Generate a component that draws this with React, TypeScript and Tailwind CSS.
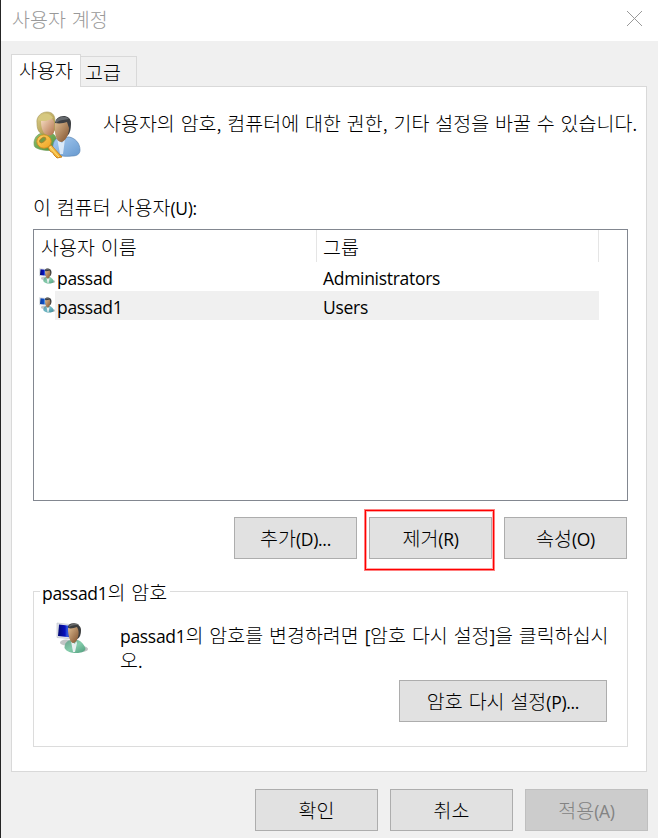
import type { ReactNode } from 'react';

const users = [
  { name: 'passad', group: 'Administrators', selected: false },
  { name: 'passad1', group: 'Users', selected: true },
];

// Latin runs are set in a separate face, slightly smaller than the Hangul around them
function Label({ text, className = '' }: { text: string; className?: string }) {
  const runs = text.split(/([A-Za-z0-9()[\]:.]+)/).filter(Boolean);
  return (
    <span className={`block h-[25px] whitespace-pre font-['Noto_Sans_CJK_KR',sans-serif] font-light text-[19.5px] leading-[23px] [word-spacing:1.6px] ${className}`}>
      {runs.map((run, i) =>
        /^[A-Za-z0-9()[\]:.]/.test(run) ? (
          <span key={i} className="font-['Open_Sans',sans-serif] text-[17.5px] font-normal leading-none tracking-[-0.3px]">{run}</span>
        ) : (
          <span key={i}>{run}</span>
        )
      )}
    </span>
  );
}

function Button({ children, disabled, wide }: { children: ReactNode; disabled?: boolean; wide?: boolean }) {
  return (
    <button
      disabled={disabled}
      className={`flex h-[42px] items-center justify-center border ${wide ? 'w-[208px]' : 'w-[123px]'} ${
        disabled ? 'border-[#bfbfbf] bg-[#cccccc] text-[#838383]' : 'border-[#adadad] bg-[#e1e1e1] text-black'
      }`}
    >
      {children}
    </button>
  );
}

function Gradients() {
  return (
    <svg className="absolute size-0">
      <defs>
        <linearGradient id="skin" x1="0" y1="0" x2="1" y2="1">
          <stop offset="0" stopColor="#dfbd92" />
          <stop offset="1" stopColor="#7e4f2c" />
        </linearGradient>
        <linearGradient id="paleSkin" x1="0" y1="0" x2="1" y2="1">
          <stop offset="0" stopColor="#f8dfc5" />
          <stop offset="1" stopColor="#b0704a" />
        </linearGradient>
        <linearGradient id="green" x1="0" y1="0" x2="1" y2="1">
          <stop offset="0" stopColor="#94c273" />
          <stop offset="1" stopColor="#4b8d35" />
        </linearGradient>
        <linearGradient id="blue" x1="0" y1="0" x2="1" y2="1">
          <stop offset="0" stopColor="#a9cdf2" />
          <stop offset="1" stopColor="#6799cf" />
        </linearGradient>
        <linearGradient id="teal" x1="0" y1="0" x2="1" y2="1">
          <stop offset="0" stopColor="#6aa08c" />
          <stop offset="0.5" stopColor="#85ccab" />
          <stop offset="1" stopColor="#4d9c7b" />
        </linearGradient>
        <linearGradient id="aqua" x1="0" y1="0" x2="1" y2="1">
          <stop offset="0" stopColor="#5c95ab" />
          <stop offset="0.5" stopColor="#70b8c4" />
          <stop offset="1" stopColor="#3c8793" />
        </linearGradient>
        <linearGradient id="screen" x1="0" y1="0" x2="1" y2="0">
          <stop offset="0" stopColor="#020874" />
          <stop offset="0.5" stopColor="#0710bd" />
          <stop offset="0.65" stopColor="#3158df" />
          <stop offset="1" stopColor="#0b19b8" />
        </linearGradient>
        <linearGradient id="screenSelected" x1="0" y1="0" x2="1" y2="0">
          <stop offset="0" stopColor="#0a3d9c" />
          <stop offset="0.5" stopColor="#0d4cc4" />
          <stop offset="0.65" stopColor="#4a8fe6" />
          <stop offset="1" stopColor="#1550c4" />
        </linearGradient>
        <linearGradient id="gold" x1="0" y1="0" x2="1" y2="1">
          <stop offset="0" stopColor="#fcd263" />
          <stop offset="1" stopColor="#eea222" />
        </linearGradient>
        <linearGradient id="hair" x1="0" y1="0" x2="1" y2="1">
          <stop offset="0" stopColor="#ddd08a" />
          <stop offset="1" stopColor="#a38c42" />
        </linearGradient>
      </defs>
    </svg>
  );
}

function UsersIcon() {
  return (
    <svg width="48" height="48" viewBox="0 0 48 48">
      <path d="M1 31c1-6 5-9 10-9h7c4 1 6 5 6 10v6c-6 3-19 1-22-2-1-1-1-3-1-5z" fill="url(#green)" stroke="#6d9b57" strokeWidth=".6" />
      <path d="M4 12C3 6 8 1 14 1c6 0 8 4 8 9v9l-3 4H9c-4-2-5-6-5-11z" fill="url(#hair)" stroke="#a39454" strokeWidth=".6" />
      <path d="M8 10c4 0 8-1 10-3 3 2 4 5 3 9v5c-1 3-4 4-7 3-4-1-6-7-6-14z" fill="url(#paleSkin)" />
      <path d="M5 9c4 2 11 1 15-2-2-4-6-5-9-4-3 1-5 3-6 6z" fill="#d6c880" />
      <path d="M20 39c-1-7 2-12 7-13h9c6 1 11 6 11 13 0 4-3 6-8 6-8 1-16 0-19-6z" fill="url(#blue)" stroke="#5c87b5" strokeWidth=".7" />
      <path d="M24 27l5 5 3-4-2 15h-3z" fill="#edf5fc" opacity=".8" />
      <path d="M22 14c-1-11 16-12 16-2 0 6-1 11-4 13L24 17z" fill="#3d3f42" />
      <path d="M22 12c5 1 9 0 12-1l2 6c0 7-4 14-8 14-5 0-7-9-6-19z" fill="url(#skin)" />
      <path d="M23 9c4-4 10-4 13-1-4 1-8 0-13 4z" fill="#666a6e" />
      <path d="M18 34l11 12-5 1-3-3-1-2-3-2-2-4z" fill="url(#gold)" stroke="#c67d16" strokeWidth=".9" />
      <ellipse cx="11" cy="30.5" rx="7.2" ry="6.7" fill="url(#gold)" stroke="#d08c20" strokeWidth=".9" />
      <ellipse cx="9.7" cy="29" rx="3.7" ry="2.1" transform="rotate(-38 9.7 29)" fill="#769a45" stroke="#b68123" strokeWidth=".8" />
      <path d="M17 36l9 10" stroke="#ffe27a" strokeWidth="1" />
    </svg>
  );
}

function UserIcon({ size, selected }: { size: number; selected?: boolean }) {
  return (
    <svg width={size} height={size} viewBox="0 0 32 32" className="shrink-0">
      <ellipse cx="10" cy="20.5" rx="6" ry="3" fill="#c3c5c6" />
      <ellipse cx="26" cy="27" rx="6" ry="3" fill="#bfc1c2" />
      <path d="M1 1l17 2-1 14-16-1.500z" fill="#e2e5ec" stroke="#b9bdc6" strokeWidth=".6" />
      <path d="M3 2.500l13 1.500v11.500L2 14z" fill={selected ? 'url(#screenSelected)' : 'url(#screen)'} />
      <path d="M8.500 26c0-5 3-8 7-8h6c4 1 7 5 8 9-1 3-5 4-9 4-5 0-10-1-12-5z" fill={selected ? 'url(#aqua)' : 'url(#teal)'} />
      <path d="M15 19l4 3 1-3 1 2-2 9h-2z" fill="#e8eff0" />
      <path d="M12 5c0-6 13-5 13 3 0 4-1 8-4 9z" fill="#3c3d3e" />
      <path d="M12 6c3 1 6 0 9-1 2 3 2 7 1 10-1 4-3 6-5 6s-5-5-5-15z" fill="url(#skin)" />
      <path d="M13 4c3-3 8-3 10-1-4 0-6 0-10 2z" fill="#686a6b" />
    </svg>
  );
}

export default function App() {
  return (
    <div className="flex h-[838px] w-[658px] flex-col overflow-hidden border-l border-[#252525] bg-[#f0f0f0] text-black">
      <Gradients />
      <header className="flex h-[41px] shrink-0 items-start justify-between bg-white pl-[11px] pr-[15px] text-[#999999]">
        <Label text="사용자 계정" className="mt-[7px]" />
        <svg width="17" height="17" viewBox="0 0 17 17" className="mt-[10px]" stroke="#999999" fill="none">
          <path d="M1 1l15 15M16 1L1 16" />
        </svg>
      </header>

      <nav className="z-10 ml-[10px] mt-[13px] flex h-[32px] shrink-0 items-end">
        <div className="-mb-px h-[33px] w-[70px] border border-b-0 border-[#d9d9d9] bg-white pl-[7px] pt-[3px]">
          <Label text="사용자" />
        </div>
        <div className="h-[30px] w-[56px] border border-b-0 border-l-0 border-[#d9d9d9] pl-[4px] pt-[3px]">
          <Label text="고급" />
        </div>
      </nav>

      <main className="ml-[10px] h-[686px] w-[636px] shrink-0 border border-[#d9d9d9] bg-white pl-[21px]">
        <div className="flex h-[108px] pt-[24px]">
          <UsersIcon />
          <Label text="사용자의 암호, 컴퓨터에 대한 권한, 기타 설정을 바꿀 수 있습니다." className="ml-[22px]" />
        </div>
        <Label text="이 컴퓨터 사용자(U):" />

        <section className="mt-[9px] h-[272px] w-[595px] border border-[#828790]">
          <div className="flex h-[32px] w-[565px] border-r border-[#e5e5e5] pt-[5px]">
            <div className="-mt-[5px] w-[283px] border-r border-[#e5e5e5] pl-[7px] pt-[5px]">
              <Label text="사용자 이름" />
            </div>
            <Label text="그룹" className="pl-[6px]" />
          </div>
          {users.map((user) => (
            <div key={user.name} className="flex h-[29px] w-[565px] pl-[5px]">
              <div className="w-[16px] pt-[6px]">
                <UserIcon size={16} selected={user.selected} />
              </div>
              <div className={`flex flex-1 pl-[2px] pt-[3px] ${user.selected ? 'bg-[#f0f0f0]' : ''}`}>
                <Label text={user.name} className="w-[266px]" />
                <Label text={user.group} />
              </div>
            </div>
          ))}
        </section>

        <div className="mt-[16px] flex gap-[12px] pl-[201px]">
          <Button><Label text="추가(D)..." /></Button>
          <div className="relative">
            <Button><Label text="제거(R)" /></Button>
            <div className="absolute -left-[4px] -top-[7px] h-[60px] w-[129px] border border-[#ff0000] shadow-[0_0_0_1px_rgba(255,0,0,0.5),inset_0_0_0_1px_rgba(255,0,0,0.35)]" />
          </div>
          <Button><Label text="속성(O)" /></Button>
        </div>

        <section className="mt-[32px] h-[156px] w-[595px] border border-[#dcdcdc]">
          <div className="-mt-[12px] ml-[6px] w-[130px] bg-white pl-[2px]">
            <Label text="passad1의 암호" />
          </div>
          <div className="mt-[17px] flex h-[58px] pl-[22px]">
            <UserIcon size={32} />
            <div className="ml-[32px] pt-px">
              <Label text="passad1의 암호를 변경하려면 [암호 다시 설정]을 클릭하십시" />
              <Label text="오." />
            </div>
          </div>
          <div className="flex justify-end pr-[20px]">
            <Button wide><Label text="암호 다시 설정(P)..." /></Button>
          </div>
        </section>
      </main>

      <footer className="mt-[17px] flex gap-[12px] pl-[254px]">
        <Button><Label text="확인" /></Button>
        <Button><Label text="취소" /></Button>
        <Button disabled><Label text="적용(A)" /></Button>
      </footer>
    </div>
  );
}
